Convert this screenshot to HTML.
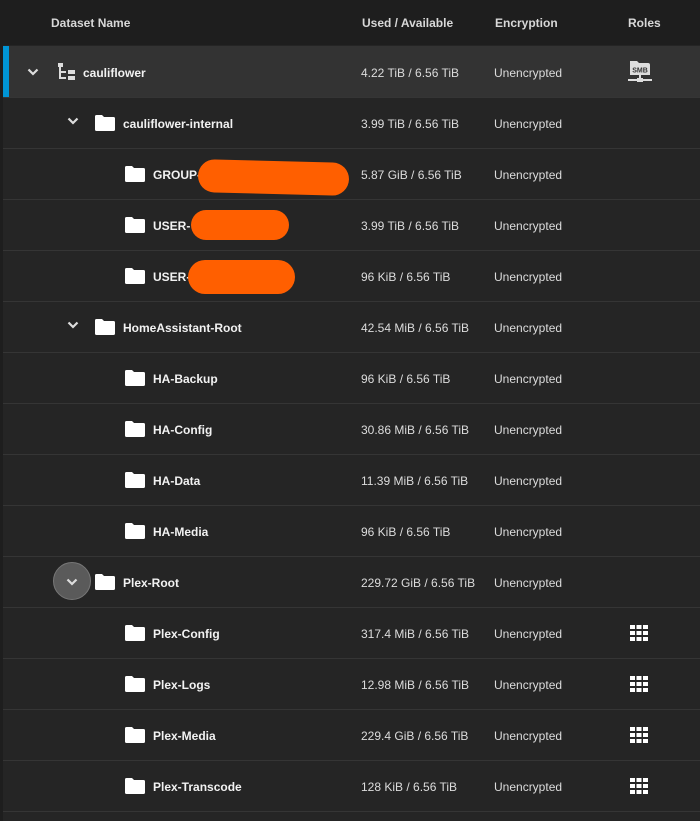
<!DOCTYPE html>
<html><head><style>
body{margin:0;width:700px;height:821px;background:#252525;font-family:"Liberation Sans",sans-serif;overflow:hidden;position:relative;color:#e8e8e8}
.hdr{position:absolute;left:0;top:0;width:700px;height:45px;background:#1e1e1e;font-weight:bold;font-size:12px;color:#d8d8d8}
.hdr span{position:absolute;top:16px}
.row{position:absolute;left:3px;width:697px;height:50px;border-bottom:1px solid #353535;font-size:12px}
.row .n{position:absolute;top:19px;font-weight:bold;color:#f2f2f2}
.row .u{position:absolute;left:358px;top:19px;color:#dcdcdc}
.row .e{position:absolute;left:491px;top:19px;color:#dcdcdc}
.fold{position:absolute;top:17px;width:20px;height:16px}
.chev{position:absolute;top:19px;width:12px;height:8px}
.grid{position:absolute;left:627px;top:17px;width:18px;height:16px}
.blob{position:absolute;background:#ff5f00;border-radius:18px}
</style></head><body>
<div style="position:absolute;left:0;top:45px;width:3px;height:776px;background:#1e1e1e"></div>
<div class="hdr"><span style="left:51px">Dataset Name</span><span style="left:362px">Used / Available</span><span style="left:495px">Encryption</span><span style="left:628px">Roles</span></div>

<svg width="0" height="0" style="position:absolute"><defs>
<symbol id="f" viewBox="0 0 20 16"><path d="M0 1.5Q0 0 1.5 0H7L9 2H18.5Q20 2 20 3.5V14.5Q20 16 18.5 16H1.5Q0 16 0 14.5Z" fill="#fff"/></symbol>
<symbol id="c" viewBox="0 0 12 8"><path d="M1.5 1.5L6 6L10.5 1.5" stroke="#ddd" stroke-width="2.2" fill="none"/></symbol>
<symbol id="g" viewBox="0 0 18 16"><g fill="#fff"><rect x="0" y="0" width="5" height="4"/><rect x="6.5" y="0" width="5" height="4"/><rect x="13" y="0" width="5" height="4"/><rect x="0" y="6" width="5" height="4"/><rect x="6.5" y="6" width="5" height="4"/><rect x="13" y="6" width="5" height="4"/><rect x="0" y="12" width="5" height="4"/><rect x="6.5" y="12" width="5" height="4"/><rect x="13" y="12" width="5" height="4"/></g></symbol>
</defs></svg>

<div class="row" style="top:46px;height:51px;background:#333">
<div style="position:absolute;left:0;top:0;width:6px;height:51px;background:#0095d5"></div>
<svg class="chev" style="left:24px;top:22px"><use href="#c"/></svg>
<svg style="position:absolute;left:53px;top:17px" width="22" height="18"><g fill="#ddd"><rect x="2" y="0" width="5" height="4"/><rect x="3" y="4" width="2" height="12"/><rect x="3" y="8" width="7" height="2"/><rect x="3" y="14" width="7" height="2"/><rect x="12" y="7" width="7" height="4"/><rect x="12" y="13" width="7" height="4"/></g></svg>
<span class="n" style="left:80px;top:20px">cauliflower</span><span class="u" style="top:20px">4.22 TiB / 6.56 TiB</span><span class="e" style="top:20px">Unencrypted</span>
<svg style="position:absolute;left:624px;top:14px" width="26" height="24"><path d="M3 1H10L12 3H21Q23 3 23 5V15H3Z" fill="#ddd"/><text x="13" y="12.5" font-size="7" font-family="Liberation Sans" fill="#333" text-anchor="middle" font-weight="bold">SMB</text><rect x="12" y="15" width="2" height="4" fill="#ddd"/><rect x="1" y="19" width="24" height="2" fill="#ddd"/><rect x="10" y="18" width="6" height="4" fill="#ddd"/></svg>
</div>

<div class="row" style="top:98px"><svg class="chev" style="left:64px"><use href="#c"/></svg><svg class="fold" style="left:92px"><use href="#f"/></svg><span class="n" style="left:120px">cauliflower-internal</span><span class="u">3.99 TiB / 6.56 TiB</span><span class="e">Unencrypted</span></div>
<div class="row" style="top:149px"><svg class="fold" style="left:122px"><use href="#f"/></svg><span class="n" style="left:150px">GROUP-</span><span class="u">5.87 GiB / 6.56 TiB</span><span class="e">Unencrypted</span></div>
<div class="row" style="top:200px"><svg class="fold" style="left:122px"><use href="#f"/></svg><span class="n" style="left:150px">USER-</span><span class="u">3.99 TiB / 6.56 TiB</span><span class="e">Unencrypted</span></div>
<div class="row" style="top:251px"><svg class="fold" style="left:122px"><use href="#f"/></svg><span class="n" style="left:150px">USER-</span><span class="u">96 KiB / 6.56 TiB</span><span class="e">Unencrypted</span></div>
<div class="row" style="top:302px"><svg class="chev" style="left:64px"><use href="#c"/></svg><svg class="fold" style="left:92px"><use href="#f"/></svg><span class="n" style="left:120px">HomeAssistant-Root</span><span class="u">42.54 MiB / 6.56 TiB</span><span class="e">Unencrypted</span></div>
<div class="row" style="top:353px"><svg class="fold" style="left:122px"><use href="#f"/></svg><span class="n" style="left:150px">HA-Backup</span><span class="u">96 KiB / 6.56 TiB</span><span class="e">Unencrypted</span></div>
<div class="row" style="top:404px"><svg class="fold" style="left:122px"><use href="#f"/></svg><span class="n" style="left:150px">HA-Config</span><span class="u">30.86 MiB / 6.56 TiB</span><span class="e">Unencrypted</span></div>
<div class="row" style="top:455px"><svg class="fold" style="left:122px"><use href="#f"/></svg><span class="n" style="left:150px">HA-Data</span><span class="u">11.39 MiB / 6.56 TiB</span><span class="e">Unencrypted</span></div>
<div class="row" style="top:506px"><svg class="fold" style="left:122px"><use href="#f"/></svg><span class="n" style="left:150px">HA-Media</span><span class="u">96 KiB / 6.56 TiB</span><span class="e">Unencrypted</span></div>
<div class="row" style="top:557px"><div style="position:absolute;left:50px;top:5px;width:38px;height:38px;border-radius:50%;background:#5a5a5a;border:1px solid #777;box-sizing:border-box"></div><svg class="chev" style="left:63px;top:21px"><use href="#c"/></svg><svg class="fold" style="left:92px"><use href="#f"/></svg><span class="n" style="left:120px">Plex-Root</span><span class="u">229.72 GiB / 6.56 TiB</span><span class="e">Unencrypted</span></div>
<div class="row" style="top:608px"><svg class="fold" style="left:122px"><use href="#f"/></svg><span class="n" style="left:150px">Plex-Config</span><span class="u">317.4 MiB / 6.56 TiB</span><span class="e">Unencrypted</span><svg class="grid"><use href="#g"/></svg></div>
<div class="row" style="top:659px"><svg class="fold" style="left:122px"><use href="#f"/></svg><span class="n" style="left:150px">Plex-Logs</span><span class="u">12.98 MiB / 6.56 TiB</span><span class="e">Unencrypted</span><svg class="grid"><use href="#g"/></svg></div>
<div class="row" style="top:710px"><svg class="fold" style="left:122px"><use href="#f"/></svg><span class="n" style="left:150px">Plex-Media</span><span class="u">229.4 GiB / 6.56 TiB</span><span class="e">Unencrypted</span><svg class="grid"><use href="#g"/></svg></div>
<div class="row" style="top:761px"><svg class="fold" style="left:122px"><use href="#f"/></svg><span class="n" style="left:150px">Plex-Transcode</span><span class="u">128 KiB / 6.56 TiB</span><span class="e">Unencrypted</span><svg class="grid"><use href="#g"/></svg></div>

<div class="blob" style="left:198px;top:161px;width:151px;height:33px;transform:rotate(1.5deg)"></div>
<div class="blob" style="left:191px;top:210px;width:98px;height:30px"></div>
<div class="blob" style="left:188px;top:260px;width:107px;height:34px"></div>
</body></html>
